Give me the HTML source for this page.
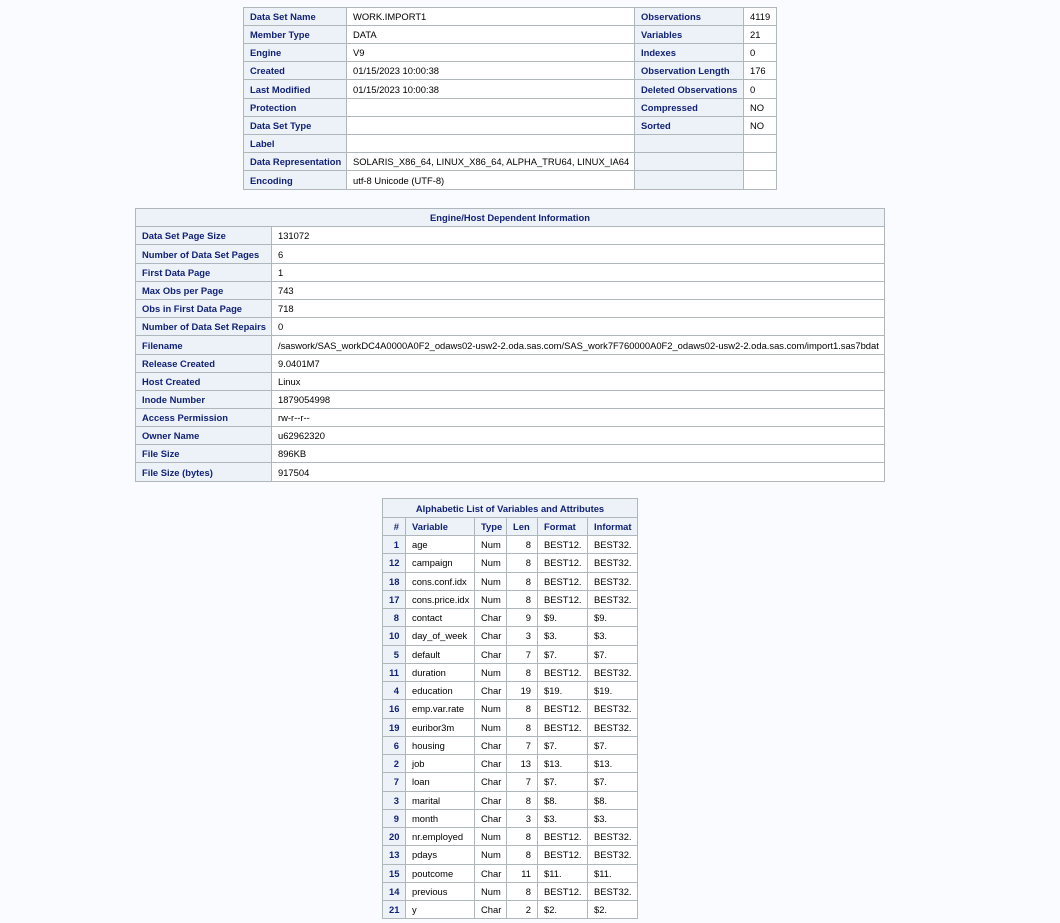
<!DOCTYPE html>
<html><head><meta charset="utf-8"><style>
body{margin:0;background:#fafbfe;font-family:"Liberation Sans",Arial,sans-serif;font-size:9.4px;color:#000}
table{position:absolute;border-collapse:collapse;table-layout:fixed;border:1px solid #b0b7bb}
td,th{border:1px solid #b0b7bb;padding:0 6px;height:17px;white-space:nowrap;overflow:hidden;background:#fff;font-weight:normal;text-align:left}
th{background:#edf2f9;color:#112277;font-weight:bold}
th.c{text-align:center}
td.r{text-align:right}
#t3 tr{height:18.25px}
</style></head><body>
<table style="left:243px;top:7px;width:533px">
<colgroup><col style="width:103px"><col style="width:288px"><col style="width:109px"><col style="width:33px"></colgroup>
<tr style="height:18px"><th>Data Set Name</th><td>WORK.IMPORT1</td><th>Observations</th><td>4119</td></tr>
<tr style="height:18px"><th>Member Type</th><td>DATA</td><th>Variables</th><td>21</td></tr>
<tr style="height:18px"><th>Engine</th><td>V9</td><th>Indexes</th><td>0</td></tr>
<tr style="height:18px"><th>Created</th><td>01/15/2023 10:00:38</td><th>Observation Length</th><td>176</td></tr>
<tr style="height:19px"><th>Last Modified</th><td>01/15/2023 10:00:38</td><th>Deleted Observations</th><td>0</td></tr>
<tr style="height:18px"><th>Protection</th><td></td><th>Compressed</th><td>NO</td></tr>
<tr style="height:18px"><th>Data Set Type</th><td></td><th>Sorted</th><td>NO</td></tr>
<tr style="height:18px"><th>Label</th><td></td><th></th><td></td></tr>
<tr style="height:18px"><th>Data Representation</th><td>SOLARIS_X86_64, LINUX_X86_64, ALPHA_TRU64, LINUX_IA64</td><th></th><td></td></tr>
<tr style="height:19px"><th>Encoding</th><td>utf-8 Unicode (UTF-8)</td><th></th><td></td></tr>
</table>

<table style="left:135px;top:208px;width:749px">
<colgroup><col style="width:136px"><col style="width:613px"></colgroup>
<tr style="height:18px"><th colspan="2" class="c">Engine/Host Dependent Information</th></tr>
<tr style="height:18px"><th>Data Set Page Size</th><td>131072</td></tr>
<tr style="height:19px"><th>Number of Data Set Pages</th><td>6</td></tr>
<tr style="height:18px"><th>First Data Page</th><td>1</td></tr>
<tr style="height:18px"><th>Max Obs per Page</th><td>743</td></tr>
<tr style="height:18px"><th>Obs in First Data Page</th><td>718</td></tr>
<tr style="height:18px"><th>Number of Data Set Repairs</th><td>0</td></tr>
<tr style="height:19px"><th>Filename</th><td>/saswork/SAS_workDC4A0000A0F2_odaws02-usw2-2.oda.sas.com/SAS_work7F760000A0F2_odaws02-usw2-2.oda.sas.com/import1.sas7bdat</td></tr>
<tr style="height:18px"><th>Release Created</th><td>9.0401M7</td></tr>
<tr style="height:18px"><th>Host Created</th><td>Linux</td></tr>
<tr style="height:18px"><th>Inode Number</th><td>1879054998</td></tr>
<tr style="height:18px"><th>Access Permission</th><td>rw-r--r--</td></tr>
<tr style="height:18px"><th>Owner Name</th><td>u62962320</td></tr>
<tr style="height:18px"><th>File Size</th><td>896KB</td></tr>
<tr style="height:19px"><th>File Size (bytes)</th><td>917504</td></tr>
</table>

<table id="t3" style="left:382px;top:498px;width:255px">
<colgroup><col style="width:23px"><col style="width:69px"><col style="width:32px"><col style="width:31px"><col style="width:50px"><col style="width:50px"></colgroup>
<tr style="height:19px"><th colspan="6" class="c">Alphabetic List of Variables and Attributes</th></tr>
<tr style="height:18px"><th style="text-align:right">#</th><th>Variable</th><th>Type</th><th>Len</th><th>Format</th><th>Informat</th></tr>
<tr><th style="text-align:right">1</th><td>age</td><td>Num</td><td class="r">8</td><td>BEST12.</td><td>BEST32.</td></tr>
<tr><th style="text-align:right">12</th><td>campaign</td><td>Num</td><td class="r">8</td><td>BEST12.</td><td>BEST32.</td></tr>
<tr><th style="text-align:right">18</th><td>cons.conf.idx</td><td>Num</td><td class="r">8</td><td>BEST12.</td><td>BEST32.</td></tr>
<tr><th style="text-align:right">17</th><td>cons.price.idx</td><td>Num</td><td class="r">8</td><td>BEST12.</td><td>BEST32.</td></tr>
<tr><th style="text-align:right">8</th><td>contact</td><td>Char</td><td class="r">9</td><td>$9.</td><td>$9.</td></tr>
<tr><th style="text-align:right">10</th><td>day_of_week</td><td>Char</td><td class="r">3</td><td>$3.</td><td>$3.</td></tr>
<tr><th style="text-align:right">5</th><td>default</td><td>Char</td><td class="r">7</td><td>$7.</td><td>$7.</td></tr>
<tr><th style="text-align:right">11</th><td>duration</td><td>Num</td><td class="r">8</td><td>BEST12.</td><td>BEST32.</td></tr>
<tr><th style="text-align:right">4</th><td>education</td><td>Char</td><td class="r">19</td><td>$19.</td><td>$19.</td></tr>
<tr><th style="text-align:right">16</th><td>emp.var.rate</td><td>Num</td><td class="r">8</td><td>BEST12.</td><td>BEST32.</td></tr>
<tr><th style="text-align:right">19</th><td>euribor3m</td><td>Num</td><td class="r">8</td><td>BEST12.</td><td>BEST32.</td></tr>
<tr><th style="text-align:right">6</th><td>housing</td><td>Char</td><td class="r">7</td><td>$7.</td><td>$7.</td></tr>
<tr><th style="text-align:right">2</th><td>job</td><td>Char</td><td class="r">13</td><td>$13.</td><td>$13.</td></tr>
<tr><th style="text-align:right">7</th><td>loan</td><td>Char</td><td class="r">7</td><td>$7.</td><td>$7.</td></tr>
<tr><th style="text-align:right">3</th><td>marital</td><td>Char</td><td class="r">8</td><td>$8.</td><td>$8.</td></tr>
<tr><th style="text-align:right">9</th><td>month</td><td>Char</td><td class="r">3</td><td>$3.</td><td>$3.</td></tr>
<tr><th style="text-align:right">20</th><td>nr.employed</td><td>Num</td><td class="r">8</td><td>BEST12.</td><td>BEST32.</td></tr>
<tr><th style="text-align:right">13</th><td>pdays</td><td>Num</td><td class="r">8</td><td>BEST12.</td><td>BEST32.</td></tr>
<tr><th style="text-align:right">15</th><td>poutcome</td><td>Char</td><td class="r">11</td><td>$11.</td><td>$11.</td></tr>
<tr><th style="text-align:right">14</th><td>previous</td><td>Num</td><td class="r">8</td><td>BEST12.</td><td>BEST32.</td></tr>
<tr><th style="text-align:right">21</th><td>y</td><td>Char</td><td class="r">2</td><td>$2.</td><td>$2.</td></tr>
</table>
</body></html>
